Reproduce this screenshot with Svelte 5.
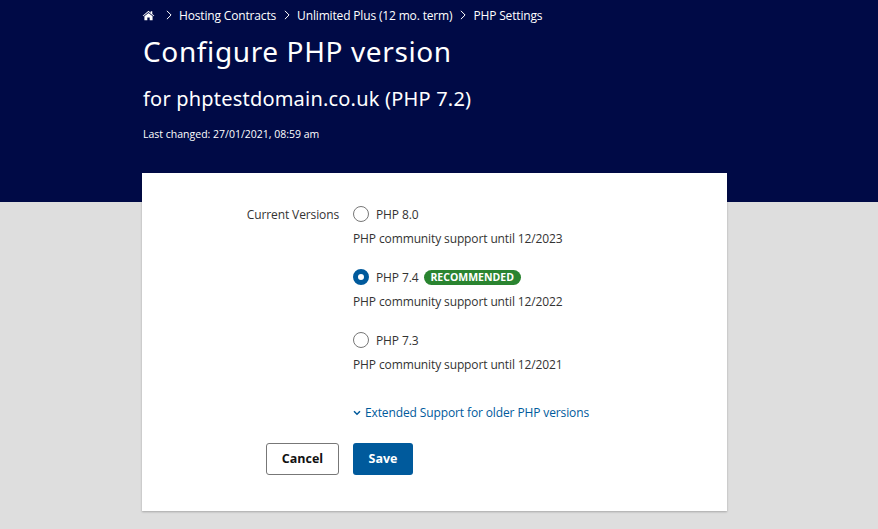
<script>
  const versions = [
    { id: "80", label: "PHP 8.0", note: "PHP community support until 12/2023" },
    { id: "74", label: "PHP 7.4", note: "PHP community support until 12/2022", recommended: true },
    { id: "73", label: "PHP 7.3", note: "PHP community support until 12/2021" }
  ];
  const crumbs = ["Hosting Contracts", "Unlimited Plus (12 mo. term)", "PHP Settings"];

  let selected = $state("74");
</script>

<div class="page">
  <header class="hero">
    <nav class="crumbs">
      <svg class="home" viewBox="0 0 16 14" aria-hidden="true">
        <path d="M8 1 0.6 7.2l.7.9L8 2.6l6.7 5.5.7-.9L12.8 5V1.6h-2v1.8L8 1z" />
        <path d="M8 3.8 2.8 8.1V13.2h3.7V9.6h3V13.2h3.7V8.1L8 3.8z" />
      </svg>
      {#each crumbs as crumb}
        <svg class="sep" viewBox="0 0 7 12" aria-hidden="true">
          <path d="M1 1l5 5-5 5" />
        </svg>
        <span>{crumb}</span>
      {/each}
    </nav>
    <h1>Configure PHP version</h1>
    <h2>for phptestdomain.co.uk (PHP 7.2)</h2>
    <p class="changed">Last changed: 27/01/2021, 08:59 am</p>
  </header>

  <main class="card">
    <div class="row">
      <div class="label version-label">Current Versions</div>
      <div class="options">
        {#each versions as v}
          <div class="option">
            <label class="radio-line">
              <input type="radio" name="version" value={v.id} bind:group={selected} />
              <span class="radio"></span>
              <span>{v.label}</span>
              {#if v.recommended}
                <span class="badge">RECOMMENDED</span>
              {/if}
            </label>
            <div class="note">{v.note}</div>
          </div>
        {/each}
        <button class="more">
          <svg viewBox="0 0 8 6" aria-hidden="true"><path d="M1 1.2l3 3 3-3" /></svg>
          Extended Support for older PHP versions
        </button>
      </div>
    </div>
    <div class="row actions">
      <div class="label"><button class="btn cancel">Cancel</button></div>
      <button class="btn save">Save</button>
    </div>
  </main>
</div>

<style>
  :global(body) {
    margin: 0;
    background: #dedede;
  }

  .page {
    height: 529px;
    overflow: hidden;
    font-family: "Open Sans", sans-serif;
    font-size: 12px;
    letter-spacing: -0.12px;
    color: #333;
  }

  .hero {
    height: 202px;
    box-sizing: border-box;
    padding: 6px 142px 0 143px;
    background: #000a46;
    color: #fff;
  }

  .crumbs {
    display: flex;
    align-items: center;
    height: 18px;
    font-size: 12px;
    letter-spacing: -0.16px;
  }

  .home {
    width: 13px;
    height: 11px;
    margin-left: -1px;
    margin-right: 11px;
    fill: #fff;
  }

  .sep {
    width: 6px;
    height: 10px;
    margin-right: 7px;
    fill: none;
    stroke: #fff;
    stroke-width: 1.2;
  }

  .crumbs span {
    margin-right: 8px;
  }

  h1 {
    margin: 9px 0 0;
    font-family: "Noto Sans", sans-serif;
    font-size: 28px;
    font-weight: 400;
    line-height: 36px;
    letter-spacing: 0.62px;
  }

  h2 {
    margin: 17px 0 0;
    font-family: "Noto Sans", sans-serif;
    font-size: 20px;
    font-weight: 400;
    line-height: 26px;
    letter-spacing: 0.2px;
  }

  .changed {
    margin: 15px 0 0;
    font-size: 10.5px;
    line-height: 14px;
    letter-spacing: 0;
  }

  .card {
    width: 585px;
    height: 338px;
    box-sizing: border-box;
    margin: -29px 0 0 142px;
    padding-top: 32px;
    background: #fff;
    box-shadow: 0 1px 2px rgba(0, 0, 0, 0.25);
    position: relative;
  }

  .row {
    display: flex;
    gap: 14px;
  }

  .label {
    width: 197px;
    flex: none;
    display: flex;
    justify-content: flex-end;
    line-height: 18px;
  }

  .version-label {
    padding-top: 1px;
  }

  .options {
    display: flex;
    flex-direction: column;
  }

  .option {
    margin-bottom: 20px;
  }

  .radio-line {
    display: flex;
    align-items: center;
    height: 18px;
  }

  .radio-line input {
    position: absolute;
    opacity: 0;
    width: 0;
    height: 0;
  }

  .radio {
    width: 14px;
    height: 14px;
    margin-right: 7px;
    border: 1px solid #777;
    border-radius: 50%;
    background: #fff;
  }

  input:checked + .radio {
    width: 6px;
    height: 6px;
    border: 5px solid #005a9c;
  }

  .badge {
    margin-left: 6px;
    padding: 0 7px 0 6px;
    border-radius: 8px;
    background: #2a8430;
    color: #fff;
    font-size: 10.5px;
    font-weight: 700;
    line-height: 15px;
    letter-spacing: 0;
  }

  .note {
    margin-top: 7px;
    line-height: 18px;
  }

  .more {
    display: flex;
    align-items: center;
    gap: 4px;
    margin-top: 10px;
    padding: 0;
    border: 0;
    background: none;
    color: #005a9c;
    font: inherit;
    letter-spacing: inherit;
    line-height: 18px;
  }

  .more svg {
    width: 8px;
    height: 6px;
    fill: none;
    stroke: #005a9c;
    stroke-width: 1.5;
  }

  .actions {
    margin-top: 21px;
  }

  .btn {
    height: 32px;
    padding: 0 0 2px;
    border-radius: 3px;
    font-family: "Open Sans", sans-serif;
    font-size: 12.5px;
    font-weight: 700;
  }

  .cancel {
    width: 73px;
    border: 1px solid #777;
    background: #fff;
    color: #111;
  }

  .save {
    width: 60px;
    border: 0;
    background: #005a9c;
    color: #fff;
  }
</style>
